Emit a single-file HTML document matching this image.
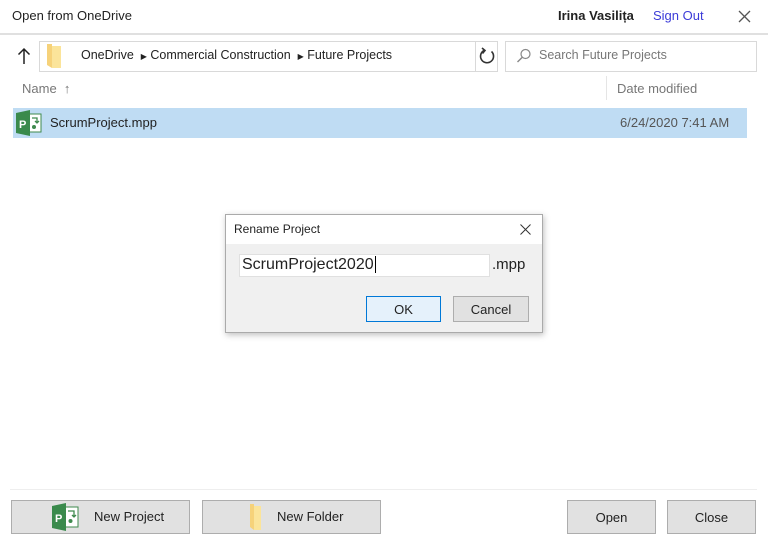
<!DOCTYPE html>
<html><head><meta charset="utf-8"><style>
*{box-sizing:border-box;margin:0;padding:0}
body{width:768px;height:552px;background:#fff;font-family:"Segoe UI","Liberation Sans",sans-serif;font-size:13px;color:#222;position:relative;overflow:hidden}
.a{position:absolute}
.btn{position:absolute;background:#e1e1e1;border:1px solid #adadad;font-size:13px;color:#222;display:flex;align-items:center;justify-content:center}
</style></head><body>
<div class="a" style="left:12px;top:8px;font-size:13px">Open from OneDrive</div>
<div class="a" style="left:558px;top:8px;font-weight:bold;font-size:13px">Irina Vasilița</div>
<div class="a" style="left:653px;top:8px;color:#3b3bd8">Sign Out</div>
<svg class="a" style="left:738px;top:10px" width="13" height="13"><path d="M1 1L12 12M12 1L1 12" stroke="#555" stroke-width="1.3"/></svg>
<div class="a" style="left:0;top:33px;width:768px;height:2px;background:#e0e0e0"></div>
<svg class="a" style="left:17px;top:47px" width="14" height="18"><path d="M7 2V17M1.5 7.5L7 2L12.5 7.5" stroke="#222" stroke-width="1.5" fill="none"/></svg>
<div class="a" style="left:39px;top:41px;width:459px;height:31px;border:1px solid #d9d9d9"></div>
<div class="a" style="left:475px;top:42px;width:1px;height:29px;background:#d9d9d9"></div>
<svg class="a" style="left:46px;top:43px" width="18" height="26"><path d="M1 1H6V3H15V25H6L1 22Z" fill="#f6d27a"/><path d="M6 3H15V25H6Z" fill="#fbe49a"/></svg>
<div class="a" style="left:81px;top:48px;font-size:12.5px">OneDrive &nbsp;<span style="font-size:8px">▶</span> Commercial Construction &nbsp;<span style="font-size:8px">▶</span> Future Projects</div>
<svg class="a" style="left:478px;top:46px" width="18" height="20"><path d="M13.5 5.5A6.5 6.5 0 1 1 6 4.5" stroke="#333" stroke-width="1.6" fill="none"/><path d="M4 2L7 4.5L4.5 7.5" stroke="#333" stroke-width="1.6" fill="none"/></svg>
<div class="a" style="left:505px;top:41px;width:252px;height:31px;border:1px solid #d9d9d9"></div>
<svg class="a" style="left:516px;top:48px" width="16" height="16"><circle cx="9.5" cy="6" r="4.5" stroke="#888" fill="none" stroke-width="1.2"/><path d="M6.3 9.2L1.5 14" stroke="#888" stroke-width="1.4"/></svg>
<div class="a" style="left:539px;top:48px;color:#777;font-size:12.5px">Search Future Projects</div>
<div class="a" style="left:22px;top:81px;color:#777">Name &nbsp;↑</div>
<div class="a" style="left:606px;top:76px;width:1px;height:24px;background:#e5e5e5"></div>
<div class="a" style="left:617px;top:81px;color:#777">Date modified</div>
<div class="a" style="left:13px;top:108px;width:734px;height:30px;background:#bfdcf3"></div>
<svg class="a" style="left:15px;top:110px" width="28" height="26"><rect x="12" y="4" width="14" height="18" fill="#fff" stroke="#3f8a4e"/><path d="M1 3L15 0V26L1 23Z" fill="#3a8a4c"/><text x="4" y="18" fill="#fff" font-size="11" font-weight="bold" font-family="Liberation Sans">P</text><path d="M17 8H22V13M20 11L22 13L24 11" stroke="#3f8a4e" fill="none" stroke-width="1.3"/><circle cx="19" cy="17" r="2" fill="#3f8a4e"/></svg>
<div class="a" style="left:50px;top:115px">ScrumProject.mpp</div>
<div class="a" style="left:620px;top:115px;color:#555">6/24/2020 7:41 AM</div>

<div class="a" style="left:225px;top:214px;width:318px;height:119px;background:#f0f0f0;border:1px solid #aaa;box-shadow:1px 2px 6px rgba(0,0,0,.25)">
 <div style="background:#fff;height:29px;padding:7px 0 0 8px;font-size:12px">Rename Project</div>
 <svg class="a" style="left:294px;top:9px" width="11" height="11"><path d="M0.5 0.5L10.5 10.5M10.5 0.5L0.5 10.5" stroke="#333"/></svg>
 <div class="a" style="left:13px;top:39px;width:251px;height:23px;background:#fff;border:1px solid #e0e0e0;font-size:16px;padding:1px 0 0 2px">ScrumProject2020<span style="border-left:1px solid #000;margin-left:1px"></span></div>
 <div class="a" style="left:266px;top:41px;font-size:15px">.mpp</div>
 <div class="btn" style="left:140px;top:81px;width:75px;height:26px;background:#e5f1fb;border-color:#0078d7">OK</div>
 <div class="btn" style="left:227px;top:81px;width:76px;height:26px">Cancel</div>
</div>

<div class="a" style="left:10px;top:489px;width:747px;height:1px;background:#eeeeee"></div>
<div class="btn" style="left:11px;top:500px;width:179px;height:34px"></div>
<svg class="a" style="left:51px;top:503px" width="29" height="28"><rect x="12" y="4" width="15" height="20" fill="#fff" stroke="#3f8a4e"/><path d="M1 3L15 0V28L1 25Z" fill="#3a8a4c"/><text x="4" y="19" fill="#fff" font-size="11" font-weight="bold" font-family="Liberation Sans">P</text><path d="M17 8H23V14M21 12L23 14L25 12" stroke="#3f8a4e" fill="none" stroke-width="1.3"/><circle cx="19.5" cy="18" r="2" fill="#3f8a4e"/></svg>
<div class="a" style="left:94px;top:509px">New Project</div>
<div class="btn" style="left:202px;top:500px;width:179px;height:34px"></div>
<svg class="a" style="left:249px;top:503px" width="14" height="28"><path d="M1 1H5V3H12V27H5L1 24Z" fill="#f6d27a"/><path d="M5 3H12V27H5Z" fill="#fbe49a"/></svg>
<div class="a" style="left:277px;top:509px">New Folder</div>
<div class="btn" style="left:567px;top:500px;width:89px;height:34px">Open</div>
<div class="btn" style="left:667px;top:500px;width:89px;height:34px">Close</div>
</body></html>
